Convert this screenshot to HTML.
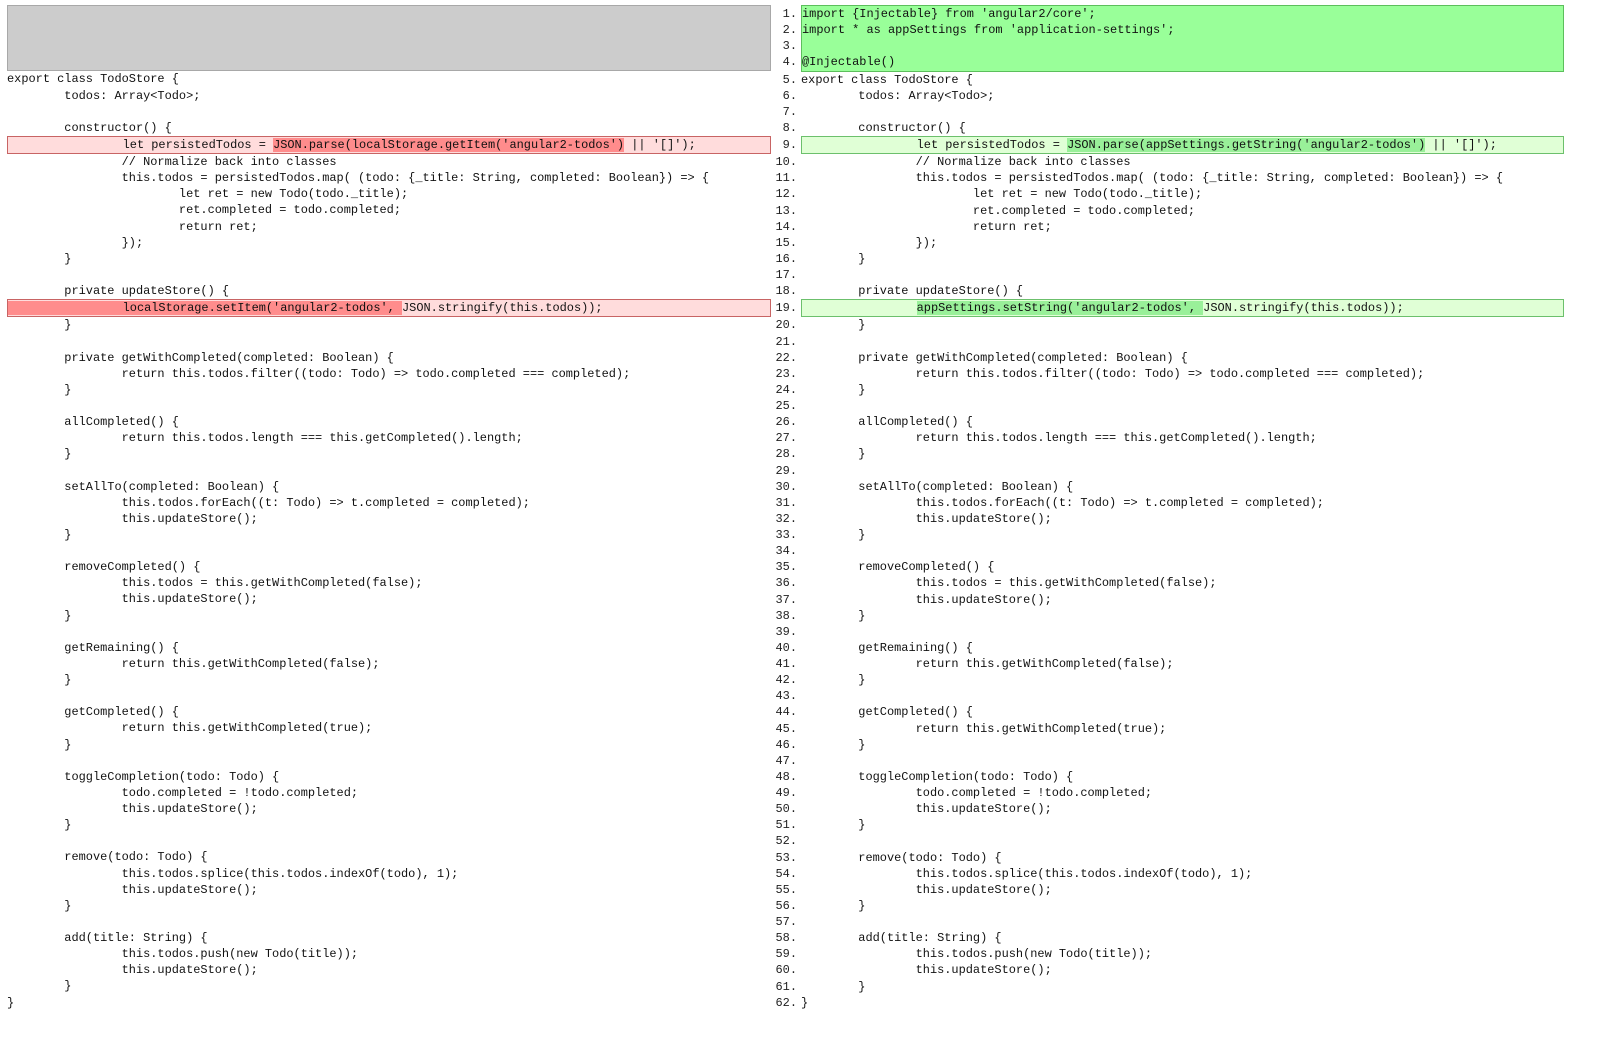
<!DOCTYPE html>
<html><head><meta charset="utf-8"><style>
body{margin:0;background:#fff;width:1600px;height:1037px;overflow:hidden;font-family:"Liberation Mono",monospace;font-size:11.95px;color:#111}
.pane{position:absolute;top:5px}
#L{left:7px;width:764px}
#R{left:774px;width:790px}
.g{display:flex}
.n{width:23px;text-align:right;padding-right:4px;color:#222;white-space:pre;line-height:16.12px}
.c{flex:1;white-space:pre;line-height:16.12px}
.b .n{padding-top:1px;padding-bottom:1px}
.grey{background:#cccccc;border:1px solid #a8a8a8}
.red{background:#ffdcdc;border:1px solid #c86464}
.gb{background:#99ff99;border:1px solid #5cbf5c}
.gl{background:#e0ffd6;border:1px solid #6cc06c}
.hr{background:#ff8c8c}
.hg{background:#99f099}
.r{height:16.12px}
</style></head><body>
<div class="pane" id="L"><div class="c grey"><div class="r"></div><div class="r"></div><div class="r"></div><div class="r"></div></div><div class="c">export class TodoStore {
        todos: Array&lt;Todo&gt;;

        constructor() {</div><div class="c red">                let persistedTodos = <span class="hr">JSON.parse(localStorage.getItem('angular2-todos')</span> || '[]');</div><div class="c">                // Normalize back into classes
                this.todos = persistedTodos.map( (todo: {_title: String, completed: Boolean}) =&gt; {
                        let ret = new Todo(todo._title);
                        ret.completed = todo.completed;
                        return ret;
                });
        }

        private updateStore() {</div><div class="c red"><span class="hr">                localStorage.setItem('angular2-todos', </span>JSON.stringify(this.todos));</div><div class="c">        }

        private getWithCompleted(completed: Boolean) {
                return this.todos.filter((todo: Todo) =&gt; todo.completed === completed);
        }

        allCompleted() {
                return this.todos.length === this.getCompleted().length;
        }

        setAllTo(completed: Boolean) {
                this.todos.forEach((t: Todo) =&gt; t.completed = completed);
                this.updateStore();
        }

        removeCompleted() {
                this.todos = this.getWithCompleted(false);
                this.updateStore();
        }

        getRemaining() {
                return this.getWithCompleted(false);
        }

        getCompleted() {
                return this.getWithCompleted(true);
        }

        toggleCompletion(todo: Todo) {
                todo.completed = !todo.completed;
                this.updateStore();
        }

        remove(todo: Todo) {
                this.todos.splice(this.todos.indexOf(todo), 1);
                this.updateStore();
        }

        add(title: String) {
                this.todos.push(new Todo(title));
                this.updateStore();
        }
}</div></div>
<div class="pane" id="R">
<div class="g b"><div class="n">1.
2.
3.
4.</div><div class="c gb">import {Injectable} from 'angular2/core';
import * as appSettings from 'application-settings';

@Injectable()</div></div>
<div class="g"><div class="n">5.
6.
7.
8.</div><div class="c">export class TodoStore {
        todos: Array&lt;Todo&gt;;

        constructor() {</div></div>
<div class="g b"><div class="n">9.</div><div class="c gl">                let persistedTodos = <span class="hg">JSON.parse(appSettings.getString('angular2-todos')</span> || '[]');</div></div>
<div class="g"><div class="n">10.
11.
12.
13.
14.
15.
16.
17.
18.</div><div class="c">                // Normalize back into classes
                this.todos = persistedTodos.map( (todo: {_title: String, completed: Boolean}) =&gt; {
                        let ret = new Todo(todo._title);
                        ret.completed = todo.completed;
                        return ret;
                });
        }

        private updateStore() {</div></div>
<div class="g b"><div class="n">19.</div><div class="c gl">                <span class="hg">appSettings.setString('angular2-todos', </span>JSON.stringify(this.todos));</div></div>
<div class="g"><div class="n">20.
21.
22.
23.
24.
25.
26.
27.
28.
29.
30.
31.
32.
33.
34.
35.
36.
37.
38.
39.
40.
41.
42.
43.
44.
45.
46.
47.
48.
49.
50.
51.
52.
53.
54.
55.
56.
57.
58.
59.
60.
61.
62.</div><div class="c">        }

        private getWithCompleted(completed: Boolean) {
                return this.todos.filter((todo: Todo) =&gt; todo.completed === completed);
        }

        allCompleted() {
                return this.todos.length === this.getCompleted().length;
        }

        setAllTo(completed: Boolean) {
                this.todos.forEach((t: Todo) =&gt; t.completed = completed);
                this.updateStore();
        }

        removeCompleted() {
                this.todos = this.getWithCompleted(false);
                this.updateStore();
        }

        getRemaining() {
                return this.getWithCompleted(false);
        }

        getCompleted() {
                return this.getWithCompleted(true);
        }

        toggleCompletion(todo: Todo) {
                todo.completed = !todo.completed;
                this.updateStore();
        }

        remove(todo: Todo) {
                this.todos.splice(this.todos.indexOf(todo), 1);
                this.updateStore();
        }

        add(title: String) {
                this.todos.push(new Todo(title));
                this.updateStore();
        }
}</div></div>
</div>
</body></html>
